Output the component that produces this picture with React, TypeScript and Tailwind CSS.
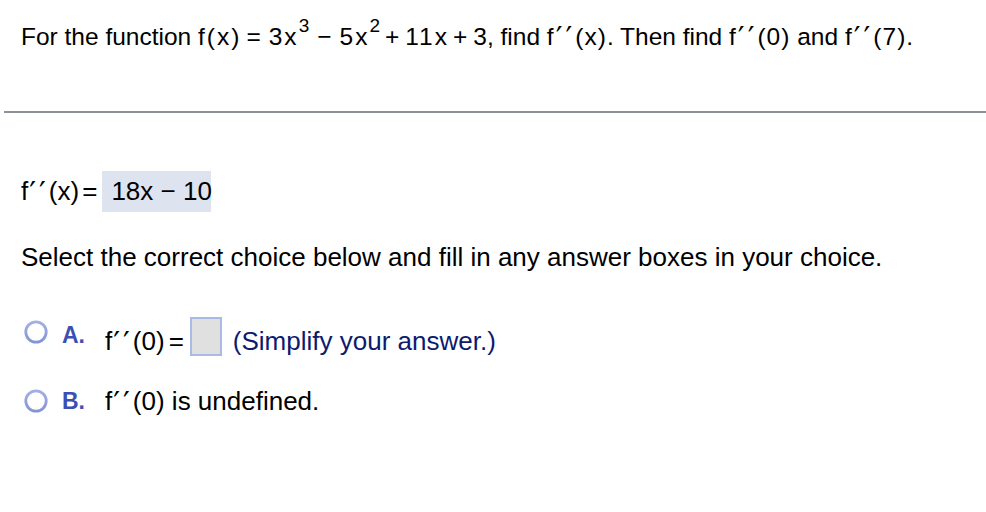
import React from "react";

function Pp() {
  return (
    <span
      style={{ fontFamily: '"DejaVu Sans", sans-serif' }}
      className="text-[30px] leading-[0] tracking-[3px] ml-[1px] relative top-[3px]"
    >
      {"\u2032\u2032"}
    </span>
  );
}

function Radio() {
  return (
    <svg width="24" height="24" viewBox="0 0 24 24" className="shrink-0">
      <defs>
        <linearGradient id="rg" x1="0" y1="0" x2="0" y2="1">
          <stop offset="0" stopColor="#a3b0e4" />
          <stop offset="1" stopColor="#8394d6" />
        </linearGradient>
      </defs>
      <circle cx="12" cy="12" r="10.2" fill="#fff" stroke="url(#rg)" strokeWidth="2.8" />
    </svg>
  );
}

export default function App() {
  return (
    <div
      className="w-[986px] h-[512px] bg-white text-black overflow-hidden"
      style={{ fontFamily: '"Liberation Sans", Arial, sans-serif' }}
    >
      <div className="pl-[21px] pt-[19px] text-[24.5px] leading-[36px] h-[111px] whitespace-nowrap">
        For the function <span className="tracking-[2px]">f(x)</span>
        <span className="ml-[5px]">=</span>
        <span className="ml-[8px] tracking-[2px]">3x</span>
        <sup className="text-[19px] top-[-13px]">3</sup>
        <span className="ml-[8px]">−</span>
        <span className="ml-[8px] tracking-[2px]">5x</span>
        <sup className="text-[19px] top-[-13px]">2</sup>
        <span className="ml-[5px]">+</span>
        <span className="ml-[6px] tracking-[2px]">11x</span>
        <span className="ml-[4px]">+</span>
        <span className="ml-[6px]">3, find </span>
        <span className="tracking-[1px]">f<Pp />(x)</span>. Then find <span className="tracking-[1px]">f<Pp />(0)</span> and{" "}
        <span className="tracking-[1px]">f<Pp />(7)</span>.
      </div>
      <div className="ml-[4px] h-[2px] bg-[#8c9099]" />
      <div className="pl-[21px] mt-[58px] flex items-center h-[41px] text-[26px] whitespace-nowrap">
        <span>f<Pp />(x)<span className="ml-[3px]">=</span></span>
        <span className="ml-[5px] bg-[#dde3ef] h-[41px] w-[109px] flex items-center pl-[9px]">18x − 10</span>
      </div>
      <div className="pl-[21px] mt-[29px] text-[26px] leading-[32px] whitespace-nowrap">
        Select the correct choice below and fill in any answer boxes in your choice.
      </div>
      <div className="pl-[24px] mt-[47px] flex items-start h-[40px] whitespace-nowrap">
        <Radio />
        <span className="ml-[14px] mt-[3px] text-[23px] leading-[24px] font-bold text-[#3c50b4]">A.</span>
        <span className="ml-[20px] mt-[5px] text-[26px] leading-[32px]">
          f<Pp />(0)<span className="ml-[4px]">=</span>
        </span>
        <span className="ml-[6px] mt-[-3px] w-[32px] h-[39px] bg-[#e0e0e0] border-2 border-[#a9b9e8]" />
        <span className="ml-[11px] mt-[5px] text-[26px] leading-[32px] text-[#0d1a6e]">(Simplify your answer.)</span>
      </div>
      <div className="pl-[24px] mt-[21px] flex items-center h-[40px] whitespace-nowrap">
        <Radio />
        <span className="ml-[14px] text-[23px] font-bold text-[#3c50b4]">B.</span>
        <span className="ml-[20px] text-[26px]">f<Pp />(0) is undefined.</span>
      </div>
    </div>
  );
}
